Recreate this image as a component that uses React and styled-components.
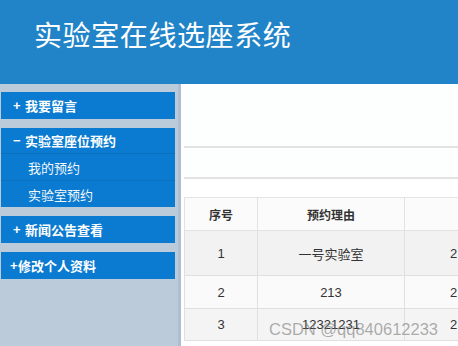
import styled, { createGlobalStyle } from "styled-components";

const Global = createGlobalStyle`
  html, body { margin: 0; padding: 0; }
  body {
    font-family: "Liberation Sans", "Noto Sans CJK SC", sans-serif;
    background: #fff;
    overflow: hidden;
  }
`

const menus = [
  { sign: "+", gap: true, title: "我要留言" },
  { sign: "−", gap: true, title: "实验室座位预约", children: ["我的预约", "实验室预约"] },
  { sign: "+", gap: true, title: "新闻公告查看" },
  { sign: "+", gap: false, title: "修改个人资料" },
];

const rows = [
  { no: 1, reason: "一号实验室", date: "2", h: 45, bg: "#f2f2f2" },
  { no: 2, reason: "213", date: "2", h: 33, bg: "#fafafa" },
  { no: 3, reason: "12321231", date: "2", h: 32, bg: "#f4f4f4" },
];

export default function App() {
  return (
    <>
      <Global />
      <Page>
        <Header>
          <Title>实验室在线选座系统</Title>
        </Header>
        <Body>
          <Sidebar>
            {menus.map((m) => (
              <MenuGroup key={m.title}>
                <MenuTitle $tall={!m.children} $indent={m.gap ? 12 : 9}>
                  <Sign $gap={m.gap}>{m.sign}</Sign>{m.title}
                </MenuTitle>
                {m.children && m.children.map((c) => (
                  <SubItem key={c}>{c}</SubItem>
                ))}
              </MenuGroup>
            ))}
          </Sidebar>
          <Main>
            <TopPanel />
            <ToolBar />
            <Table>
              <colgroup>
                <col style={{ width: 73 }} />
                <col style={{ width: 147 }} />
                <col style={{ width: 100 }} />
              </colgroup>
              <thead>
                <HeadRow>
                  <Th>序号</Th>
                  <Th>预约理由</Th>
                  <Th>预约时间</Th>
                </HeadRow>
              </thead>
              <tbody>
                {rows.map((r) => (
                  <Row key={r.no} $h={r.h} $bg={r.bg}>
                    <Td>{r.no}</Td>
                    <Td>{r.reason}</Td>
                    <Td $left>{r.date}</Td>
                  </Row>
                ))}
              </tbody>
            </Table>
            <Watermark>CSDN @qq840612233</Watermark>
          </Main>
        </Body>
      </Page>
    </>
  );
}

const Page = styled.div`
  width: 458px;
  height: 346px;
  display: flex;
  flex-direction: column;
`
const Header = styled.div`
  height: 84px;
  background: #2184c8;
  display: flex;
  align-items: center;
  padding-left: 34px;
  padding-bottom: 16px;
  box-sizing: border-box;
`
const Title = styled.h1`
  margin: 0;
  color: #fff;
  font-family: "Noto Sans CJK SC", sans-serif;
  font-weight: 400;
  font-size: 28px;
  letter-spacing: 0.6px;
`
const Body = styled.div`
  flex: 1;
  display: flex;
  min-height: 0;
`
const Sidebar = styled.div`
  width: 181px;
  flex-shrink: 0;
  background: #bccbda;
  border-right: 3px solid #aebdd5;
  padding: 8px 0 0 1px;
  box-sizing: border-box;
  display: flex;
  flex-direction: column;
  gap: 9px;
`
const MenuGroup = styled.div`
  width: 174px;
  background: #0a7bd0;
  display: flex;
  flex-direction: column;
`
const MenuTitle = styled.div`
  height: ${(p) => (p.$tall ? 27 : 25)}px;
  display: flex;
  align-items: center;
  padding-left: ${(p) => p.$indent}px;
  color: #fff;
  font-family: "Noto Sans CJK SC", sans-serif;
  font-weight: 700;
  font-size: 13px;
  white-space: pre;
`
const Sign = styled.span`
  font-family: "Liberation Sans", sans-serif;
  font-weight: 700;
  width: ${(p) => (p.$gap ? 12 : 8)}px;
`
const SubItem = styled.div`
  height: 27px;
  display: flex;
  align-items: center;
  padding-left: 27px;
  color: #f2f7fc;
  font-family: "Noto Sans CJK SC", sans-serif;
  font-size: 13px;
  border-top: 1px solid #0a6fbc;
  box-sizing: border-box;
`
const Main = styled.div`
  flex: 1;
  position: relative;
  padding-left: 3px;
  min-width: 0;
  overflow: hidden;
`
const TopPanel = styled.div`
  height: 62px;
  border-bottom: 2px solid #e2e2e2;
  background: #fdfefe;
`
const ToolBar = styled.div`
  height: 29px;
  border-bottom: 2px solid #e2e2e2;
  background: #fdfefe;
  margin-bottom: 18px;
`
const Table = styled.table`
  border-collapse: collapse;
  table-layout: fixed;
  width: 320px;
  color: #333;
  font-size: 13px;
  border-top: 1px solid #e4e4e4;
`
const HeadRow = styled.tr`
  height: 33px;
  background: #fbfbfb;
`
const Th = styled.th`
  border: 1px solid #e2e2e2;
  border-top: none;
  font-family: "Noto Sans CJK SC", sans-serif;
  font-weight: 700;
  font-size: 12px;
  text-align: center;
  padding: 0;
  white-space: nowrap;
  overflow: hidden;
  &:last-child { text-indent: 90px; color: #b09a40; }
`
const Row = styled.tr`
  height: ${(p) => p.$h}px;
  background: ${(p) => p.$bg};
`
const Td = styled.td`
  border: 1px solid #e0e0e0;
  text-align: ${(p) => (p.$left ? "left" : "center")};
  padding: ${(p) => (p.$left ? "0 0 0 45px" : "0")};
  font-family: "Liberation Sans", "Noto Sans CJK SC", sans-serif;
  white-space: nowrap;
  overflow: hidden;
`
const Watermark = styled.div`
  position: absolute;
  left: 88px;
  top: 236px;
  font-family: "Liberation Sans", sans-serif;
  font-size: 16.5px;
  color: rgba(120, 120, 120, 0.6);
  white-space: nowrap;
  pointer-events: none;
`
